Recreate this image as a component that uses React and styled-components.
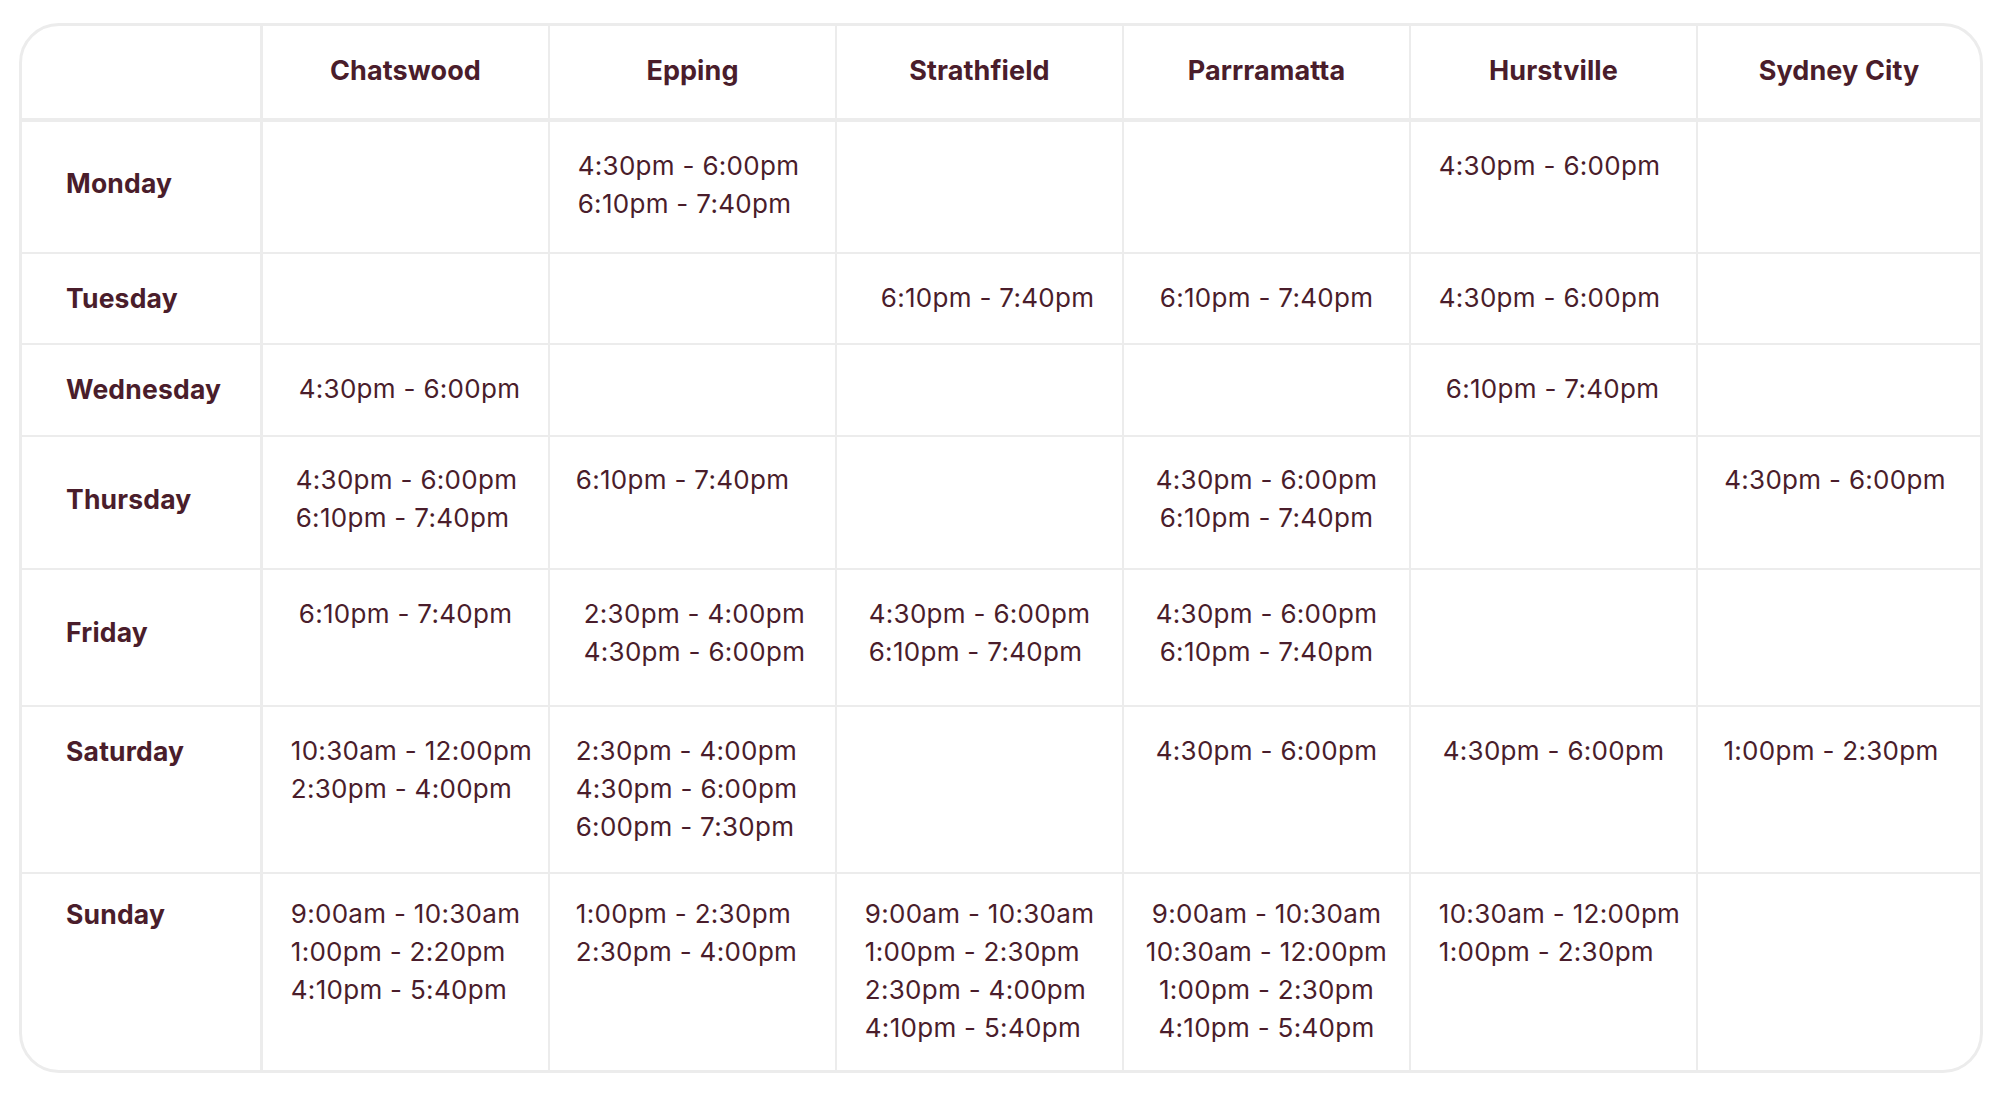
import React from 'react'
import styled, { createGlobalStyle } from 'styled-components'

const INK = '#4a1d2b'
const LINE = '#ececec'

const locations = ['Chatswood', 'Epping', 'Strathfield', 'Parrramatta', 'Hurstville', 'Sydney City']

// Parramatta centres each line, the other columns centre a block of left aligned lines
const centredColumns = [false, false, false, true, false, false]

const schedule = [
  {
    day: 'Monday', height: 132, labelPad: 42, pad: 25,
    shifts: [0, -4, 0, 0, -4, 0],
    slots: [[], ['4:30pm - 6:00pm', '6:10pm - 7:40pm'], [], [], ['4:30pm - 6:00pm'], []],
  },
  {
    day: 'Tuesday', height: 91, labelPad: 25, pad: 25,
    shifts: [0, 0, 8, 0, -4, 0],
    slots: [[], [], ['6:10pm - 7:40pm'], ['6:10pm - 7:40pm'], ['4:30pm - 6:00pm'], []],
  },
  {
    day: 'Wednesday', height: 92, labelPad: 25, pad: 25,
    shifts: [4, 0, 0, 0, -1, 0],
    slots: [['4:30pm - 6:00pm'], [], [], [], ['6:10pm - 7:40pm'], []],
  },
  {
    day: 'Thursday', height: 133, labelPad: 43, pad: 24,
    shifts: [1, -10, 0, 0, 0, -4],
    slots: [
      ['4:30pm - 6:00pm', '6:10pm - 7:40pm'],
      ['6:10pm - 7:40pm'],
      [],
      ['4:30pm - 6:00pm', '6:10pm - 7:40pm'],
      [],
      ['4:30pm - 6:00pm'],
    ],
  },
  {
    day: 'Friday', height: 137, labelPad: 43, pad: 25,
    shifts: [0, 2, 0, 0, 0, 0],
    slots: [
      ['6:10pm - 7:40pm'],
      ['2:30pm - 4:00pm', '4:30pm - 6:00pm'],
      ['4:30pm - 6:00pm', '6:10pm - 7:40pm'],
      ['4:30pm - 6:00pm', '6:10pm - 7:40pm'],
      [],
      [],
    ],
  },
  {
    day: 'Saturday', height: 167, labelPad: 25, pad: 25,
    shifts: [6, -6, 0, 0, 0, -8],
    slots: [
      ['10:30am - 12:00pm', '2:30pm - 4:00pm'],
      ['2:30pm - 4:00pm', '4:30pm - 6:00pm', '6:00pm - 7:30pm'],
      [],
      ['4:30pm - 6:00pm'],
      ['4:30pm - 6:00pm'],
      ['1:00pm - 2:30pm'],
    ],
  },
  {
    day: 'Sunday', height: 196, labelPad: 21, pad: 21, last: true,
    shifts: [0, -6, 0, 0, 6, 0],
    slots: [
      ['9:00am - 10:30am', '1:00pm - 2:20pm', '4:10pm - 5:40pm'],
      ['1:00pm - 2:30pm', '2:30pm - 4:00pm'],
      ['9:00am - 10:30am', '1:00pm - 2:30pm', '2:30pm - 4:00pm', '4:10pm - 5:40pm'],
      ['9:00am - 10:30am', '10:30am - 12:00pm', '1:00pm - 2:30pm', '4:10pm - 5:40pm'],
      ['10:30am - 12:00pm', '1:00pm - 2:30pm'],
      [],
    ],
  },
]

const GlobalStyle = createGlobalStyle`
  * { box-sizing: border-box; }
  body {
    margin: 0;
    background: #ffffff;
    font-family: Inter, "Liberation Sans", Arial, sans-serif;
    color: ${INK};
  }
`

const Card = styled.div`
  width: 1964px;
  margin: 23px 0 0 19px;
  border: 3px solid ${LINE};
  border-radius: 40px;
  overflow: hidden;
  background: #fff;
`

const Row = styled.div`
  display: grid;
  grid-template-columns: 241px repeat(5, 287px) 1fr;
  height: ${p => p.$height}px;
  border-bottom: ${p => (p.$last ? 'none' : `${p.$rule}px solid ${LINE}`)};
`

const Cell = styled.div`
  border-right: 2px solid ${LINE};
  &:first-child { border-right-width: 3px; }
  &:last-child { border-right: none; }
`

const HeadCell = styled(Cell)`
  display: flex;
  align-items: center;
  justify-content: center;
  padding-bottom: 4px;
  font-size: 27px;
  font-weight: 700;
  letter-spacing: 0.1px;
`

const DayCell = styled(Cell)`
  padding: ${p => p.$pad}px 0 0 44px;
  font-size: 26.5px;
  font-weight: 700;
  line-height: 38px;
  letter-spacing: 0.2px;
`

const SlotCell = styled(Cell)`
  display: flex;
  justify-content: center;
  align-items: flex-start;
  padding-top: ${p => p.$pad}px;
`

const SlotList = styled.div`
  display: flex;
  flex-direction: column;
  align-items: ${p => (p.$center ? 'center' : 'flex-start')};
  margin-left: ${p => p.$shift * 2}px;
  font-size: 26px;
  font-weight: 400;
  line-height: 38px;
  letter-spacing: 0.3px;
  white-space: nowrap;
`

const App = () => {
  return (
    <>
      <GlobalStyle />
      <Card>
        <Row $height={96} $rule={4}>
          <HeadCell />
          {locations.map(loc => (
            <HeadCell key={loc}>{loc}</HeadCell>
          ))}
        </Row>
        {schedule.map(row => (
          <Row key={row.day} $height={row.height} $rule={2} $last={row.last}>
            <DayCell $pad={row.labelPad}>{row.day}</DayCell>
            {row.slots.map((times, i) => (
              <SlotCell key={i} $pad={row.pad}>
                {times.length > 0 && (
                  <SlotList $center={centredColumns[i]} $shift={row.shifts[i]}>
                    {times.map(t => (
                      <span key={t}>{t}</span>
                    ))}
                  </SlotList>
                )}
              </SlotCell>
            ))}
          </Row>
        ))}
      </Card>
    </>
  )
}

export default App
